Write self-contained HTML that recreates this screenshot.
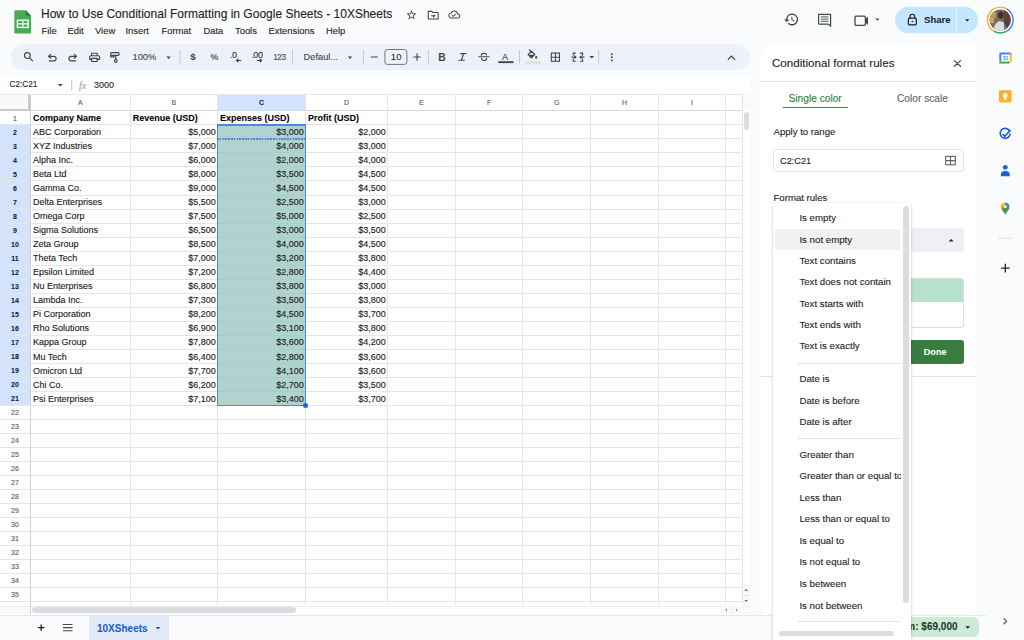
<!DOCTYPE html><html><head><meta charset="utf-8"><style>
*{box-sizing:border-box;margin:0;padding:0}
html,body{width:1024px;height:640px;overflow:hidden;background:#f9fbfd;font-family:"Liberation Sans",sans-serif;color:#1f1f1f}
.a{position:absolute}
.t{position:absolute;white-space:nowrap;line-height:1;-webkit-text-stroke:0.12px currentColor}
.t[style*="bold"]{-webkit-text-stroke:0.05px currentColor}
.t[style*="font-size:7px"]{-webkit-text-stroke:0.15px currentColor}
.t[style*="font-size:7px"][style*="bold"]{-webkit-text-stroke:0.05px currentColor}
</style></head><body>

<div class="t" style="left:41px;top:8px;font-size:12.02px;color:#1f1f1f">How to Use Conditional Formatting in Google Sheets - 10XSheets</div>
<div class="t" style="left:41.5px;top:25.5px;font-size:9.4px;color:#1f1f1f">File</div>
<div class="t" style="left:67.5px;top:25.5px;font-size:9.4px;color:#1f1f1f">Edit</div>
<div class="t" style="left:95px;top:25.5px;font-size:9.4px;color:#1f1f1f">View</div>
<div class="t" style="left:125.5px;top:25.5px;font-size:9.4px;color:#1f1f1f">Insert</div>
<div class="t" style="left:161.5px;top:25.5px;font-size:9.4px;color:#1f1f1f">Format</div>
<div class="t" style="left:203.5px;top:25.5px;font-size:9.4px;color:#1f1f1f">Data</div>
<div class="t" style="left:235px;top:25.5px;font-size:9.4px;color:#1f1f1f">Tools</div>
<div class="t" style="left:268.5px;top:25.5px;font-size:9.4px;color:#1f1f1f">Extensions</div>
<div class="t" style="left:326px;top:25.5px;font-size:9.4px;color:#1f1f1f">Help</div>
<div class="a" style="left:11px;top:44px;width:739px;height:26px;border-radius:13px;background:#edf2fa"></div>
<div class="a" style="left:0;top:76px;width:750px;height:18px;background:#fff"></div>
<div class="t" style="left:9.5px;top:81px;font-size:8.2px;color:#1f1f1f">C2:C21</div>
<div class="t" style="left:94px;top:81px;font-size:9px;color:#1f1f1f">3000</div>
<div class="a" style="left:0;top:94px;width:750px;height:520px;background:#fff;overflow:hidden">
<div class="a" style="left:217.5px;top:0;width:88.10000000000002px;height:16px;background:#d3e3fd"></div>
<div class="a" style="left:0;top:31.40px;width:30.5px;height:280.40px;background:#d3e3fd"></div>
<div class="a" style="left:742px;top:0;width:8px;height:511px;background:#fff;border-left:1px solid #eceef0"></div>
<div class="a" style="left:742px;top:0;width:8px;height:16px;background:#f8f9fa"></div>
<div class="a" style="left:743.5px;top:17.5px;width:5.5px;height:18px;background:#dadce0;border-radius:3px"></div>
<div class="a" style="left:0;top:0.4px;width:742px;height:1px;background:#e5e6e8"></div>
<div class="a" style="left:0;top:16.4px;width:742px;height:1px;background:#d6d8db"></div>
<div class="a" style="left:0;top:30.40px;width:742px;height:1px;background:#e5e6e8"></div>
<div class="a" style="left:0;top:44.42px;width:742px;height:1px;background:#e5e6e8"></div>
<div class="a" style="left:0;top:58.44px;width:742px;height:1px;background:#e5e6e8"></div>
<div class="a" style="left:0;top:72.46px;width:742px;height:1px;background:#e5e6e8"></div>
<div class="a" style="left:0;top:86.48px;width:742px;height:1px;background:#e5e6e8"></div>
<div class="a" style="left:0;top:100.50px;width:742px;height:1px;background:#e5e6e8"></div>
<div class="a" style="left:0;top:114.52px;width:742px;height:1px;background:#e5e6e8"></div>
<div class="a" style="left:0;top:128.54px;width:742px;height:1px;background:#e5e6e8"></div>
<div class="a" style="left:0;top:142.56px;width:742px;height:1px;background:#e5e6e8"></div>
<div class="a" style="left:0;top:156.58px;width:742px;height:1px;background:#e5e6e8"></div>
<div class="a" style="left:0;top:170.60px;width:742px;height:1px;background:#e5e6e8"></div>
<div class="a" style="left:0;top:184.62px;width:742px;height:1px;background:#e5e6e8"></div>
<div class="a" style="left:0;top:198.64px;width:742px;height:1px;background:#e5e6e8"></div>
<div class="a" style="left:0;top:212.66px;width:742px;height:1px;background:#e5e6e8"></div>
<div class="a" style="left:0;top:226.68px;width:742px;height:1px;background:#e5e6e8"></div>
<div class="a" style="left:0;top:240.70px;width:742px;height:1px;background:#e5e6e8"></div>
<div class="a" style="left:0;top:254.72px;width:742px;height:1px;background:#e5e6e8"></div>
<div class="a" style="left:0;top:268.74px;width:742px;height:1px;background:#e5e6e8"></div>
<div class="a" style="left:0;top:282.76px;width:742px;height:1px;background:#e5e6e8"></div>
<div class="a" style="left:0;top:296.78px;width:742px;height:1px;background:#e5e6e8"></div>
<div class="a" style="left:0;top:310.80px;width:742px;height:1px;background:#e5e6e8"></div>
<div class="a" style="left:0;top:324.82px;width:742px;height:1px;background:#e5e6e8"></div>
<div class="a" style="left:0;top:338.84px;width:742px;height:1px;background:#e5e6e8"></div>
<div class="a" style="left:0;top:352.86px;width:742px;height:1px;background:#e5e6e8"></div>
<div class="a" style="left:0;top:366.88px;width:742px;height:1px;background:#e5e6e8"></div>
<div class="a" style="left:0;top:380.90px;width:742px;height:1px;background:#e5e6e8"></div>
<div class="a" style="left:0;top:394.92px;width:742px;height:1px;background:#e5e6e8"></div>
<div class="a" style="left:0;top:408.94px;width:742px;height:1px;background:#e5e6e8"></div>
<div class="a" style="left:0;top:422.96px;width:742px;height:1px;background:#e5e6e8"></div>
<div class="a" style="left:0;top:436.98px;width:742px;height:1px;background:#e5e6e8"></div>
<div class="a" style="left:0;top:451.00px;width:742px;height:1px;background:#e5e6e8"></div>
<div class="a" style="left:0;top:465.02px;width:742px;height:1px;background:#e5e6e8"></div>
<div class="a" style="left:0;top:479.04px;width:742px;height:1px;background:#e5e6e8"></div>
<div class="a" style="left:0;top:493.06px;width:742px;height:1px;background:#e5e6e8"></div>
<div class="a" style="left:0;top:507.08px;width:742px;height:1px;background:#e5e6e8"></div>
<div class="a" style="left:0;top:521.10px;width:742px;height:1px;background:#e5e6e8"></div>
<div class="a" style="left:30.00px;top:0;width:1px;height:511px;background:#cfd1d4"></div>
<div class="a" style="left:129.80px;top:0;width:1px;height:511px;background:#e5e6e8"></div>
<div class="a" style="left:217.00px;top:0;width:1px;height:511px;background:#e5e6e8"></div>
<div class="a" style="left:305.10px;top:0;width:1px;height:511px;background:#e5e6e8"></div>
<div class="a" style="left:387.00px;top:0;width:1px;height:511px;background:#e5e6e8"></div>
<div class="a" style="left:454.90px;top:0;width:1px;height:511px;background:#e5e6e8"></div>
<div class="a" style="left:522.30px;top:0;width:1px;height:511px;background:#e5e6e8"></div>
<div class="a" style="left:590.10px;top:0;width:1px;height:511px;background:#e5e6e8"></div>
<div class="a" style="left:657.90px;top:0;width:1px;height:511px;background:#e5e6e8"></div>
<div class="a" style="left:725.30px;top:0;width:1px;height:511px;background:#e5e6e8"></div>
<div class="a" style="left:741.50px;top:0;width:1px;height:511px;background:#e5e6e8"></div>
<div class="a" style="left:217.50px;top:31.40px;width:87.60px;height:280.40px;background:#b0d3cf"></div>
<div class="a" style="left:217.50px;top:44.42px;width:87.60px;height:1px;background:#a9cdc9"></div>
<div class="a" style="left:217.50px;top:58.44px;width:87.60px;height:1px;background:#a9cdc9"></div>
<div class="a" style="left:217.50px;top:72.46px;width:87.60px;height:1px;background:#a9cdc9"></div>
<div class="a" style="left:217.50px;top:86.48px;width:87.60px;height:1px;background:#a9cdc9"></div>
<div class="a" style="left:217.50px;top:100.50px;width:87.60px;height:1px;background:#a9cdc9"></div>
<div class="a" style="left:217.50px;top:114.52px;width:87.60px;height:1px;background:#a9cdc9"></div>
<div class="a" style="left:217.50px;top:128.54px;width:87.60px;height:1px;background:#a9cdc9"></div>
<div class="a" style="left:217.50px;top:142.56px;width:87.60px;height:1px;background:#a9cdc9"></div>
<div class="a" style="left:217.50px;top:156.58px;width:87.60px;height:1px;background:#a9cdc9"></div>
<div class="a" style="left:217.50px;top:170.60px;width:87.60px;height:1px;background:#a9cdc9"></div>
<div class="a" style="left:217.50px;top:184.62px;width:87.60px;height:1px;background:#a9cdc9"></div>
<div class="a" style="left:217.50px;top:198.64px;width:87.60px;height:1px;background:#a9cdc9"></div>
<div class="a" style="left:217.50px;top:212.66px;width:87.60px;height:1px;background:#a9cdc9"></div>
<div class="a" style="left:217.50px;top:226.68px;width:87.60px;height:1px;background:#a9cdc9"></div>
<div class="a" style="left:217.50px;top:240.70px;width:87.60px;height:1px;background:#a9cdc9"></div>
<div class="a" style="left:217.50px;top:254.72px;width:87.60px;height:1px;background:#a9cdc9"></div>
<div class="a" style="left:217.50px;top:268.74px;width:87.60px;height:1px;background:#a9cdc9"></div>
<div class="a" style="left:217.50px;top:282.76px;width:87.60px;height:1px;background:#a9cdc9"></div>
<div class="a" style="left:217.50px;top:296.78px;width:87.60px;height:1px;background:#a9cdc9"></div>
<div class="a" style="left:0;top:0.5px;width:30.5px;height:16px;background:#f8f9fa;border-right:3px solid #c9cacc;border-bottom:2.5px solid #c9cacc"></div>
<div class="t" style="left:60.40px;width:40px;text-align:center;top:5px;font-size:7px;color:#5f6368;">A</div>
<div class="t" style="left:153.90px;width:40px;text-align:center;top:5px;font-size:7px;color:#5f6368;">B</div>
<div class="t" style="left:241.55px;width:40px;text-align:center;top:5px;font-size:7px;color:#041e49;font-weight:bold">C</div>
<div class="t" style="left:326.55px;width:40px;text-align:center;top:5px;font-size:7px;color:#5f6368;">D</div>
<div class="t" style="left:401.45px;width:40px;text-align:center;top:5px;font-size:7px;color:#5f6368;">E</div>
<div class="t" style="left:469.10px;width:40px;text-align:center;top:5px;font-size:7px;color:#5f6368;">F</div>
<div class="t" style="left:536.70px;width:40px;text-align:center;top:5px;font-size:7px;color:#5f6368;">G</div>
<div class="t" style="left:604.50px;width:40px;text-align:center;top:5px;font-size:7px;color:#5f6368;">H</div>
<div class="t" style="left:672.10px;width:40px;text-align:center;top:5px;font-size:7px;color:#5f6368;">I</div>
<div class="t" style="left:0;width:30px;text-align:center;top:20.60px;font-size:7px;color:#5f6368;">1</div>
<div class="t" style="left:0;width:30px;text-align:center;top:34.62px;font-size:7px;color:#041e49;font-weight:bold">2</div>
<div class="t" style="left:0;width:30px;text-align:center;top:48.64px;font-size:7px;color:#041e49;font-weight:bold">3</div>
<div class="t" style="left:0;width:30px;text-align:center;top:62.66px;font-size:7px;color:#041e49;font-weight:bold">4</div>
<div class="t" style="left:0;width:30px;text-align:center;top:76.68px;font-size:7px;color:#041e49;font-weight:bold">5</div>
<div class="t" style="left:0;width:30px;text-align:center;top:90.70px;font-size:7px;color:#041e49;font-weight:bold">6</div>
<div class="t" style="left:0;width:30px;text-align:center;top:104.72px;font-size:7px;color:#041e49;font-weight:bold">7</div>
<div class="t" style="left:0;width:30px;text-align:center;top:118.74px;font-size:7px;color:#041e49;font-weight:bold">8</div>
<div class="t" style="left:0;width:30px;text-align:center;top:132.76px;font-size:7px;color:#041e49;font-weight:bold">9</div>
<div class="t" style="left:0;width:30px;text-align:center;top:146.78px;font-size:7px;color:#041e49;font-weight:bold">10</div>
<div class="t" style="left:0;width:30px;text-align:center;top:160.80px;font-size:7px;color:#041e49;font-weight:bold">11</div>
<div class="t" style="left:0;width:30px;text-align:center;top:174.82px;font-size:7px;color:#041e49;font-weight:bold">12</div>
<div class="t" style="left:0;width:30px;text-align:center;top:188.84px;font-size:7px;color:#041e49;font-weight:bold">13</div>
<div class="t" style="left:0;width:30px;text-align:center;top:202.86px;font-size:7px;color:#041e49;font-weight:bold">14</div>
<div class="t" style="left:0;width:30px;text-align:center;top:216.88px;font-size:7px;color:#041e49;font-weight:bold">15</div>
<div class="t" style="left:0;width:30px;text-align:center;top:230.90px;font-size:7px;color:#041e49;font-weight:bold">16</div>
<div class="t" style="left:0;width:30px;text-align:center;top:244.92px;font-size:7px;color:#041e49;font-weight:bold">17</div>
<div class="t" style="left:0;width:30px;text-align:center;top:258.94px;font-size:7px;color:#041e49;font-weight:bold">18</div>
<div class="t" style="left:0;width:30px;text-align:center;top:272.96px;font-size:7px;color:#041e49;font-weight:bold">19</div>
<div class="t" style="left:0;width:30px;text-align:center;top:286.98px;font-size:7px;color:#041e49;font-weight:bold">20</div>
<div class="t" style="left:0;width:30px;text-align:center;top:301.00px;font-size:7px;color:#041e49;font-weight:bold">21</div>
<div class="t" style="left:0;width:30px;text-align:center;top:315.02px;font-size:7px;color:#5f6368;">22</div>
<div class="t" style="left:0;width:30px;text-align:center;top:329.04px;font-size:7px;color:#5f6368;">23</div>
<div class="t" style="left:0;width:30px;text-align:center;top:343.06px;font-size:7px;color:#5f6368;">24</div>
<div class="t" style="left:0;width:30px;text-align:center;top:357.08px;font-size:7px;color:#5f6368;">25</div>
<div class="t" style="left:0;width:30px;text-align:center;top:371.10px;font-size:7px;color:#5f6368;">26</div>
<div class="t" style="left:0;width:30px;text-align:center;top:385.12px;font-size:7px;color:#5f6368;">27</div>
<div class="t" style="left:0;width:30px;text-align:center;top:399.14px;font-size:7px;color:#5f6368;">28</div>
<div class="t" style="left:0;width:30px;text-align:center;top:413.16px;font-size:7px;color:#5f6368;">29</div>
<div class="t" style="left:0;width:30px;text-align:center;top:427.18px;font-size:7px;color:#5f6368;">30</div>
<div class="t" style="left:0;width:30px;text-align:center;top:441.20px;font-size:7px;color:#5f6368;">31</div>
<div class="t" style="left:0;width:30px;text-align:center;top:455.22px;font-size:7px;color:#5f6368;">32</div>
<div class="t" style="left:0;width:30px;text-align:center;top:469.24px;font-size:7px;color:#5f6368;">33</div>
<div class="t" style="left:0;width:30px;text-align:center;top:483.26px;font-size:7px;color:#5f6368;">34</div>
<div class="t" style="left:0;width:30px;text-align:center;top:497.28px;font-size:7px;color:#5f6368;">35</div>
<div class="t" style="left:0;width:30px;text-align:center;top:511.30px;font-size:7px;color:#5f6368;">36</div>
<div class="t" style="left:33.00px;top:20.00px;font-size:9px;font-weight:bold;color:#000">Company Name</div>
<div class="t" style="left:132.80px;top:20.00px;font-size:9px;font-weight:bold;color:#000">Revenue (USD)</div>
<div class="t" style="left:220.00px;top:20.00px;font-size:9px;font-weight:bold;color:#000">Expenses (USD)</div>
<div class="t" style="left:308.10px;top:20.00px;font-size:9px;font-weight:bold;color:#000">Profit (USD)</div>
<div class="t" style="left:33.00px;top:34.02px;font-size:9px;color:#1a1a1a">ABC Corporation</div>
<div class="t" style="left:130.30px;width:85.40px;text-align:right;top:34.02px;font-size:9px;color:#1a1a1a">$5,000</div>
<div class="t" style="left:217.50px;width:86.30px;text-align:right;top:34.02px;font-size:9px;color:#1a1a1a">$3,000</div>
<div class="t" style="left:305.60px;width:80.10px;text-align:right;top:34.02px;font-size:9px;color:#1a1a1a">$2,000</div>
<div class="t" style="left:33.00px;top:48.05px;font-size:9px;color:#1a1a1a">XYZ Industries</div>
<div class="t" style="left:130.30px;width:85.40px;text-align:right;top:48.05px;font-size:9px;color:#1a1a1a">$7,000</div>
<div class="t" style="left:217.50px;width:86.30px;text-align:right;top:48.05px;font-size:9px;color:#1a1a1a">$4,000</div>
<div class="t" style="left:305.60px;width:80.10px;text-align:right;top:48.05px;font-size:9px;color:#1a1a1a">$3,000</div>
<div class="t" style="left:33.00px;top:62.08px;font-size:9px;color:#1a1a1a">Alpha Inc.</div>
<div class="t" style="left:130.30px;width:85.40px;text-align:right;top:62.08px;font-size:9px;color:#1a1a1a">$6,000</div>
<div class="t" style="left:217.50px;width:86.30px;text-align:right;top:62.08px;font-size:9px;color:#1a1a1a">$2,000</div>
<div class="t" style="left:305.60px;width:80.10px;text-align:right;top:62.08px;font-size:9px;color:#1a1a1a">$4,000</div>
<div class="t" style="left:33.00px;top:76.11px;font-size:9px;color:#1a1a1a">Beta Ltd</div>
<div class="t" style="left:130.30px;width:85.40px;text-align:right;top:76.11px;font-size:9px;color:#1a1a1a">$8,000</div>
<div class="t" style="left:217.50px;width:86.30px;text-align:right;top:76.11px;font-size:9px;color:#1a1a1a">$3,500</div>
<div class="t" style="left:305.60px;width:80.10px;text-align:right;top:76.11px;font-size:9px;color:#1a1a1a">$4,500</div>
<div class="t" style="left:33.00px;top:90.14px;font-size:9px;color:#1a1a1a">Gamma Co.</div>
<div class="t" style="left:130.30px;width:85.40px;text-align:right;top:90.14px;font-size:9px;color:#1a1a1a">$9,000</div>
<div class="t" style="left:217.50px;width:86.30px;text-align:right;top:90.14px;font-size:9px;color:#1a1a1a">$4,500</div>
<div class="t" style="left:305.60px;width:80.10px;text-align:right;top:90.14px;font-size:9px;color:#1a1a1a">$4,500</div>
<div class="t" style="left:33.00px;top:104.17px;font-size:9px;color:#1a1a1a">Delta Enterprises</div>
<div class="t" style="left:130.30px;width:85.40px;text-align:right;top:104.17px;font-size:9px;color:#1a1a1a">$5,500</div>
<div class="t" style="left:217.50px;width:86.30px;text-align:right;top:104.17px;font-size:9px;color:#1a1a1a">$2,500</div>
<div class="t" style="left:305.60px;width:80.10px;text-align:right;top:104.17px;font-size:9px;color:#1a1a1a">$3,000</div>
<div class="t" style="left:33.00px;top:118.20px;font-size:9px;color:#1a1a1a">Omega Corp</div>
<div class="t" style="left:130.30px;width:85.40px;text-align:right;top:118.20px;font-size:9px;color:#1a1a1a">$7,500</div>
<div class="t" style="left:217.50px;width:86.30px;text-align:right;top:118.20px;font-size:9px;color:#1a1a1a">$5,000</div>
<div class="t" style="left:305.60px;width:80.10px;text-align:right;top:118.20px;font-size:9px;color:#1a1a1a">$2,500</div>
<div class="t" style="left:33.00px;top:132.23px;font-size:9px;color:#1a1a1a">Sigma Solutions</div>
<div class="t" style="left:130.30px;width:85.40px;text-align:right;top:132.23px;font-size:9px;color:#1a1a1a">$6,500</div>
<div class="t" style="left:217.50px;width:86.30px;text-align:right;top:132.23px;font-size:9px;color:#1a1a1a">$3,000</div>
<div class="t" style="left:305.60px;width:80.10px;text-align:right;top:132.23px;font-size:9px;color:#1a1a1a">$3,500</div>
<div class="t" style="left:33.00px;top:146.26px;font-size:9px;color:#1a1a1a">Zeta Group</div>
<div class="t" style="left:130.30px;width:85.40px;text-align:right;top:146.26px;font-size:9px;color:#1a1a1a">$8,500</div>
<div class="t" style="left:217.50px;width:86.30px;text-align:right;top:146.26px;font-size:9px;color:#1a1a1a">$4,000</div>
<div class="t" style="left:305.60px;width:80.10px;text-align:right;top:146.26px;font-size:9px;color:#1a1a1a">$4,500</div>
<div class="t" style="left:33.00px;top:160.29px;font-size:9px;color:#1a1a1a">Theta Tech</div>
<div class="t" style="left:130.30px;width:85.40px;text-align:right;top:160.29px;font-size:9px;color:#1a1a1a">$7,000</div>
<div class="t" style="left:217.50px;width:86.30px;text-align:right;top:160.29px;font-size:9px;color:#1a1a1a">$3,200</div>
<div class="t" style="left:305.60px;width:80.10px;text-align:right;top:160.29px;font-size:9px;color:#1a1a1a">$3,800</div>
<div class="t" style="left:33.00px;top:174.32px;font-size:9px;color:#1a1a1a">Epsilon Limited</div>
<div class="t" style="left:130.30px;width:85.40px;text-align:right;top:174.32px;font-size:9px;color:#1a1a1a">$7,200</div>
<div class="t" style="left:217.50px;width:86.30px;text-align:right;top:174.32px;font-size:9px;color:#1a1a1a">$2,800</div>
<div class="t" style="left:305.60px;width:80.10px;text-align:right;top:174.32px;font-size:9px;color:#1a1a1a">$4,400</div>
<div class="t" style="left:33.00px;top:188.35px;font-size:9px;color:#1a1a1a">Nu Enterprises</div>
<div class="t" style="left:130.30px;width:85.40px;text-align:right;top:188.35px;font-size:9px;color:#1a1a1a">$6,800</div>
<div class="t" style="left:217.50px;width:86.30px;text-align:right;top:188.35px;font-size:9px;color:#1a1a1a">$3,800</div>
<div class="t" style="left:305.60px;width:80.10px;text-align:right;top:188.35px;font-size:9px;color:#1a1a1a">$3,000</div>
<div class="t" style="left:33.00px;top:202.38px;font-size:9px;color:#1a1a1a">Lambda Inc.</div>
<div class="t" style="left:130.30px;width:85.40px;text-align:right;top:202.38px;font-size:9px;color:#1a1a1a">$7,300</div>
<div class="t" style="left:217.50px;width:86.30px;text-align:right;top:202.38px;font-size:9px;color:#1a1a1a">$3,500</div>
<div class="t" style="left:305.60px;width:80.10px;text-align:right;top:202.38px;font-size:9px;color:#1a1a1a">$3,800</div>
<div class="t" style="left:33.00px;top:216.41px;font-size:9px;color:#1a1a1a">Pi Corporation</div>
<div class="t" style="left:130.30px;width:85.40px;text-align:right;top:216.41px;font-size:9px;color:#1a1a1a">$8,200</div>
<div class="t" style="left:217.50px;width:86.30px;text-align:right;top:216.41px;font-size:9px;color:#1a1a1a">$4,500</div>
<div class="t" style="left:305.60px;width:80.10px;text-align:right;top:216.41px;font-size:9px;color:#1a1a1a">$3,700</div>
<div class="t" style="left:33.00px;top:230.44px;font-size:9px;color:#1a1a1a">Rho Solutions</div>
<div class="t" style="left:130.30px;width:85.40px;text-align:right;top:230.44px;font-size:9px;color:#1a1a1a">$6,900</div>
<div class="t" style="left:217.50px;width:86.30px;text-align:right;top:230.44px;font-size:9px;color:#1a1a1a">$3,100</div>
<div class="t" style="left:305.60px;width:80.10px;text-align:right;top:230.44px;font-size:9px;color:#1a1a1a">$3,800</div>
<div class="t" style="left:33.00px;top:244.47px;font-size:9px;color:#1a1a1a">Kappa Group</div>
<div class="t" style="left:130.30px;width:85.40px;text-align:right;top:244.47px;font-size:9px;color:#1a1a1a">$7,800</div>
<div class="t" style="left:217.50px;width:86.30px;text-align:right;top:244.47px;font-size:9px;color:#1a1a1a">$3,600</div>
<div class="t" style="left:305.60px;width:80.10px;text-align:right;top:244.47px;font-size:9px;color:#1a1a1a">$4,200</div>
<div class="t" style="left:33.00px;top:258.50px;font-size:9px;color:#1a1a1a">Mu Tech</div>
<div class="t" style="left:130.30px;width:85.40px;text-align:right;top:258.50px;font-size:9px;color:#1a1a1a">$6,400</div>
<div class="t" style="left:217.50px;width:86.30px;text-align:right;top:258.50px;font-size:9px;color:#1a1a1a">$2,800</div>
<div class="t" style="left:305.60px;width:80.10px;text-align:right;top:258.50px;font-size:9px;color:#1a1a1a">$3,600</div>
<div class="t" style="left:33.00px;top:272.53px;font-size:9px;color:#1a1a1a">Omicron Ltd</div>
<div class="t" style="left:130.30px;width:85.40px;text-align:right;top:272.53px;font-size:9px;color:#1a1a1a">$7,700</div>
<div class="t" style="left:217.50px;width:86.30px;text-align:right;top:272.53px;font-size:9px;color:#1a1a1a">$4,100</div>
<div class="t" style="left:305.60px;width:80.10px;text-align:right;top:272.53px;font-size:9px;color:#1a1a1a">$3,600</div>
<div class="t" style="left:33.00px;top:286.56px;font-size:9px;color:#1a1a1a">Chi Co.</div>
<div class="t" style="left:130.30px;width:85.40px;text-align:right;top:286.56px;font-size:9px;color:#1a1a1a">$6,200</div>
<div class="t" style="left:217.50px;width:86.30px;text-align:right;top:286.56px;font-size:9px;color:#1a1a1a">$2,700</div>
<div class="t" style="left:305.60px;width:80.10px;text-align:right;top:286.56px;font-size:9px;color:#1a1a1a">$3,500</div>
<div class="t" style="left:33.00px;top:300.59px;font-size:9px;color:#1a1a1a">Psi Enterprises</div>
<div class="t" style="left:130.30px;width:85.40px;text-align:right;top:300.59px;font-size:9px;color:#1a1a1a">$7,100</div>
<div class="t" style="left:217.50px;width:86.30px;text-align:right;top:300.59px;font-size:9px;color:#1a1a1a">$3,400</div>
<div class="t" style="left:305.60px;width:80.10px;text-align:right;top:300.59px;font-size:9px;color:#1a1a1a">$3,700</div>
<div class="a" style="left:216.50px;top:30.40px;width:89.60px;height:281.90px;border:1.5px solid #4d86e8"></div>
<div class="a" style="left:216.50px;top:31.00px;width:89.60px;height:1.2px;background:#4d86e8"></div>
<div class="a" style="left:216.50px;top:44.02px;width:89.60px;height:1.5px;background:repeating-linear-gradient(90deg,#4d86e8 0 1.6px,rgba(77,134,232,0.25) 1.6px 2.8px)"></div>
<div class="a" style="left:216.70px;top:30.40px;width:1.5px;height:14.02px;background:repeating-linear-gradient(180deg,#4d86e8 0 1.6px,rgba(77,134,232,0.25) 1.6px 2.8px)"></div>
<div class="a" style="left:302.80px;top:308.80px;width:5px;height:5px;border-radius:2.5px;background:#1a63e0"></div>
<div class="a" style="left:0;top:512.3px;width:742px;height:8px;background:#fff"></div>
<div class="a" style="left:0;top:512.3px;width:30px;height:8px;background:#f8f9fa"></div>
<div class="a" style="left:0;top:512px;width:742px;height:1px;background:#eceef0"></div>
<div class="a" style="left:30px;top:507px;width:1px;height:14px;background:#cfd1d4"></div>
<div class="a" style="left:32px;top:513.1px;width:264px;height:6px;border-radius:3px;background:#dadce0"></div>
<div class="a" style="left:721.4px;top:512.3px;width:21px;height:8px;background:#f8f9fa;border-left:1px solid #eceef0"></div>
<div class="a" style="left:732.3px;top:512.3px;width:1px;height:8px;background:#eceef0"></div>
<div class="a" style="left:742.5px;top:491px;width:7.5px;height:30px;background:#f8f9fa;border-top:1px solid #eceef0"></div>
<div class="a" style="left:742.5px;top:501.29999999999995px;width:7.5px;height:1px;background:#e3e6ea"></div>
<div class="a" style="left:742.5px;top:512px;width:7.5px;height:1px;background:#eceef0"></div>
</div>
<div class="a" style="left:761px;top:44px;width:215px;height:570px;background:#fff;border-radius:10px 10px 10px 10px"></div>
<div class="t" style="left:772px;top:56.8px;font-size:11.6px;color:#1f1f1f">Conditional format rules</div>
<div class="a" style="left:761px;top:81px;width:215px;height:1px;background:#e3e3e3"></div>
<div class="t" style="left:788.5px;top:94.3px;font-size:10.2px;color:#2b8442">Single color</div>
<div class="a" style="left:783px;top:106.7px;width:65px;height:1.6px;background:#2b8a45"></div>
<div class="t" style="left:897px;top:94.3px;font-size:10.2px;color:#5f6368">Color scale</div>
<div class="t" style="left:773.5px;top:127px;font-size:9.6px;color:#1f1f1f">Apply to range</div>
<div class="a" style="left:773px;top:149px;width:191px;height:23px;border:1px solid #e1e3e6;border-radius:3px"></div>
<div class="t" style="left:780px;top:156.8px;font-size:9.2px;color:#1f1f1f">C2:C21</div>
<div class="t" style="left:773.5px;top:193px;font-size:9.6px;color:#1f1f1f">Format rules</div>
<div class="a" style="left:773px;top:228px;width:191px;height:24px;background:#eef0f3;border-radius:3px"></div>
<div class="a" style="left:773px;top:278px;width:191px;height:50px;border:1px solid #dadce0;border-radius:3px;overflow:hidden"><div style="height:23px;background:#b7e1cd"></div></div>
<div class="a" style="left:890px;top:340px;width:74px;height:24px;background:#387d3f;border-radius:3px"></div>
<div class="t" style="left:923.8px;top:347.5px;font-size:9.1px;font-weight:bold;color:#fff">Done</div>
<div class="a" style="left:761px;top:376px;width:215px;height:1px;background:#e3e3e3"></div>
<div class="a" style="left:0;top:614.5px;width:986px;height:1px;background:#e6e8eb"></div>
<div class="a" style="left:89px;top:615px;width:80px;height:25px;background:#e1e9f7"></div>
<div class="t" style="left:97px;top:624.2px;font-size:10px;font-weight:bold;color:#1a5fd0">10XSheets</div>
<div class="a" style="left:870px;top:617px;width:109px;height:20px;background:#ceead6;border-radius:6px"></div>
<div class="t" style="left:893.6px;top:621.5px;font-size:10px;font-weight:bold;color:#1b3325">Sum: $69,000</div>
<svg class="a" style="left:0;top:0" width="1024" height="640"><path d="M14.3 11.5 Q14.3 10.3 15.5 10.3 H25.8 L31.1 15.7 V32.3 Q31.1 33.5 29.9 33.5 H15.5 Q14.3 33.5 14.3 32.3 Z" fill="#4bab55"/><path d="M25.8 10.3 V14.5 Q25.8 15.7 27 15.7 H31.1 Z" fill="#2e7d32" opacity="0.9"/><rect x="17.4" y="20.2" width="10.8" height="7.2" fill="none" stroke="#fff" stroke-width="1.3"/><path d="M17.4 23.8 H28.2 M22.8 20.2 V27.4" stroke="#fff" stroke-width="1.2"/><g transform="translate(405.5,8.9) scale(0.5)"><path fill="#444746" d="M22 9.24l-7.19-.62L12 2 9.19 8.63 2 9.24l5.46 4.73L5.82 21 12 17.27 18.18 21l-1.63-7.03L22 9.24zM12 15.4l-3.76 2.27 1-4.28-3.32-2.88 4.38-.38L12 6.1l1.71 4.04 4.38.38-3.32 2.88 1 4.28L12 15.4z"/></g><g transform="translate(426.6,8.6) scale(0.55)"><path fill="#444746" d="M20 6h-8l-2-2H4c-1.1 0-1.99.9-1.99 2L2 18c0 1.1.9 2 2 2h16c1.1 0 2-.9 2-2V8c0-1.1-.9-2-2-2zm0 12H4V6h5.17l2 2H20v10zM12.16 9.41l1.41 1.41-1.18 1.18H8v2h4.39l-1.18 1.18 1.41 1.41L16.24 13z"/></g><g transform="translate(448.3,8.6) scale(0.5)"><path fill="#444746" d="M19.35 10.04C18.67 6.59 15.64 4 12 4 9.11 4 6.6 5.64 5.35 8.04 2.34 8.36 0 10.91 0 14c0 3.31 2.69 6 6 6h13c2.76 0 5-2.24 5-5 0-2.64-2.05-4.78-4.65-4.96zM19 18H6c-2.21 0-4-1.79-4-4 0-2.05 1.53-3.76 3.56-3.97l1.07-.11.5-.95C8.08 7.14 9.94 6 12 6c2.62 0 4.88 1.86 5.39 4.43l.3 1.5 1.53.11c1.56.1 2.78 1.41 2.78 2.96 0 1.65-1.35 3-3 3zm-9-3.82l-2.09-2.09L6.5 13.5 10 17l6.01-6.01-1.41-1.41z"/></g><g transform="translate(783.4,11.4) scale(0.667)"><path fill="#444746" d="M13 3c-4.97 0-9 4.03-9 9H1l3.89 3.89.07.14L9 12H6c0-3.87 3.13-7 7-7s7 3.13 7 7-3.13 7-7 7c-1.93 0-3.68-.79-4.94-2.06l-1.42 1.42C8.27 19.99 10.51 21 13 21c4.97 0 9-4.03 9-9s-4.03-9-9-9zm-1 5v5l4.28 2.54.72-1.21-3.5-2.08V8H12z"/></g><path d="M818.6 15 Q818.6 14.3 819.3 14.3 H829.9 Q830.6 14.3 830.6 15 V26.2 L828.3 24.1 H819.3 Q818.6 24.1 818.6 23.4 Z" fill="none" stroke="#444746" stroke-width="1.2" stroke-linejoin="round"/><path d="M820.8 16.9 H828.4 M820.8 19.1 H828.4 M820.8 21.3 H828.4" stroke="#444746" stroke-width="0.9"/><path d="M855.6 16.2 H864.3 Q865.4 16.2 865.4 17.3 V24.3 Q865.4 25.4 864.3 25.4 H856.2 Q855 25.4 855 24.2 V17.8 Z" fill="none" stroke="#444746" stroke-width="1.3" stroke-linejoin="round"/><path d="M865.4 19 L868 16.6 V25 L865.4 22.6 Z" fill="#444746"/><path d="M875.3 18.4 H879.5 L877.4 20.7 Z" fill="#444746"/><rect x="895.1" y="6.8" width="83.1" height="26.4" rx="13.2" fill="#c2e7ff"/><rect x="956" y="6.8" width="0.9" height="26.4" fill="#f9fbfd" opacity="0.75"/><rect x="908.4" y="18.2" width="7.9" height="6.6" rx="1" fill="none" stroke="#1f1f1f" stroke-width="1.2"/><path d="M910 18.2 V16.6 A2.35 2.35 0 0 1 914.7 16.6 V18.2" fill="none" stroke="#1f1f1f" stroke-width="1.2"/><circle cx="912.35" cy="21.5" r="0.8" fill="#1f1f1f"/><path d="M965.1 19.2 H969.4 L967.25 21.5 Z" fill="#1f1f1f"/><path d="M1006.65 8.83 A12.9 12.9 0 0 1 1006.65 31.17" fill="none" stroke="#3b7ded" stroke-width="1.4"/><path d="M1006.65 31.17 A12.9 12.9 0 0 1 993.75 31.17" fill="none" stroke="#34a853" stroke-width="1.4"/><path d="M993.75 31.17 A12.9 12.9 0 0 1 1006.65 8.83" fill="none" stroke="#f4b023" stroke-width="1.4"/><clipPath id="av"><circle cx="1000.2" cy="20" r="10.6"/></clipPath><g clip-path="url(#av)"><rect x="988" y="8" width="25" height="25" fill="#7d6a5c"/><rect x="1004" y="8" width="10" height="25" fill="#5e4238"/><rect x="990" y="12" width="6" height="6" fill="#b59a5e"/><rect x="989" y="18" width="5" height="5" fill="#c4a862"/><path d="M993 33 Q994 22 1000 21 Q1007 22 1008 33 Z" fill="#d9dde0"/><ellipse cx="1000.8" cy="15.2" rx="2.8" ry="3.6" fill="#3d2f29"/><rect x="1004" y="21" width="4" height="12" fill="#3f3f42" opacity="0.7"/></g><circle cx="27.4" cy="55.6" r="2.9" fill="none" stroke="#444746" stroke-width="1.15" stroke-linecap="round" stroke-linejoin="round"/><path d="M29.6 57.8 L32.6 60.8" fill="none" stroke="#444746" stroke-width="1.15" stroke-linecap="round" stroke-linejoin="round"/><path d="M48.9 56.3 H53.8 A2.3 2.3 0 0 1 53.8 60.9 H49.4" fill="none" stroke="#444746" stroke-width="1.15" stroke-linecap="round" stroke-linejoin="round"/><path d="M50.7 54.4 L48.6 56.3 L50.7 58.2" fill="none" stroke="#444746" stroke-width="1.15" stroke-linecap="round" stroke-linejoin="round"/><path d="M76.1 56.3 H71.2 A2.3 2.3 0 0 0 71.2 60.9 H75.6" fill="none" stroke="#444746" stroke-width="1.15" stroke-linecap="round" stroke-linejoin="round"/><path d="M74.3 54.4 L76.4 56.3 L74.3 58.2" fill="none" stroke="#444746" stroke-width="1.15" stroke-linecap="round" stroke-linejoin="round"/><path d="M91.6 55.4 V53.2 H97.2 V55.4" fill="none" stroke="#444746" stroke-width="1.15" stroke-linecap="round" stroke-linejoin="round"/><path d="M91.6 59.4 H89.7 V56.8 Q89.7 55.7 90.8 55.7 H98.4 Q99.5 55.7 99.5 56.8 V59.4 H97.2" fill="none" stroke="#444746" stroke-width="1.15" stroke-linecap="round" stroke-linejoin="round"/><rect x="91.6" y="58.4" width="5.6" height="3.1" fill="none" stroke="#444746" stroke-width="1.15" stroke-linecap="round" stroke-linejoin="round"/><rect x="110.8" y="52.6" width="8.2" height="2.7" rx="0.8" fill="none" stroke="#444746" stroke-width="1.15" stroke-linecap="round" stroke-linejoin="round"/><path d="M110.8 55.3 V56.9 H115.8 V59.3" fill="none" stroke="#444746" stroke-width="1.15" stroke-linecap="round" stroke-linejoin="round"/><rect x="114.7" y="59.3" width="2.3" height="3" rx="1" fill="none" stroke="#444746" stroke-width="1.15" stroke-linecap="round" stroke-linejoin="round"/><path d="M166.4 56.6 H170.8 L168.6 58.9 Z" fill="#444746"/><path d="M347.8 56.6 H352.2 L350 58.9 Z" fill="#444746"/><path d="M589.3 56.1 H594.2 L591.75 58.4 Z" fill="#444746"/><rect x="179.6" y="50" width="1" height="13.5" fill="#c7c7c7"/><rect x="292.0" y="50" width="1" height="13.5" fill="#c7c7c7"/><rect x="362.9" y="50" width="1" height="13.5" fill="#c7c7c7"/><rect x="427.9" y="50" width="1" height="13.5" fill="#c7c7c7"/><rect x="519.0" y="50" width="1" height="13.5" fill="#c7c7c7"/><rect x="598.2" y="50" width="1" height="13.5" fill="#c7c7c7"/><path d="M240.8 60.5 H236.6 M238 59.2 L236.5 60.5 L238 61.8" fill="none" stroke="#444746" stroke-width="1.15" stroke-linecap="round" stroke-linejoin="round" stroke-width="1.05"/><path d="M257.2 60.5 H261.6 M260.2 59.2 L261.7 60.5 L260.2 61.8" fill="none" stroke="#444746" stroke-width="1.15" stroke-linecap="round" stroke-linejoin="round" stroke-width="1.05"/><path d="M371.2 57 H377.3" fill="none" stroke="#444746" stroke-width="1.15" stroke-linecap="round" stroke-linejoin="round"/><rect x="384.9" y="49.5" width="22" height="14.9" rx="2.5" fill="none" stroke="#747775" stroke-width="1"/><path d="M413.9 57 H420.2 M417.05 53.85 V60.15" fill="none" stroke="#444746" stroke-width="1.15" stroke-linecap="round" stroke-linejoin="round"/><path d="M460.5 53.6 H466 M458.9 60.2 H464.4 M463.6 53.6 L461.4 60.2" fill="none" stroke="#444746" stroke-width="1.15" stroke-linecap="round" stroke-linejoin="round" stroke-width="1.25"/><path d="M478.8 56.7 H489" fill="none" stroke="#444746" stroke-width="1.15" stroke-linecap="round" stroke-linejoin="round"/><path d="M486.6 55 Q486.3 53.3 484 53.3 Q481.3 53.3 481.3 55.2" fill="none" stroke="#444746" stroke-width="1.15" stroke-linecap="round" stroke-linejoin="round"/><path d="M481.6 58.3 Q481.6 60.5 484 60.5 Q486.6 60.5 486.6 58.5" fill="none" stroke="#444746" stroke-width="1.15" stroke-linecap="round" stroke-linejoin="round"/><rect x="498.3" y="61.2" width="15.2" height="1.9" fill="#444746"/><path d="M528.1 54.6 L531.4 51.3 L534.7 54.5 L531.4 57.8 Z" fill="none" stroke="#444746" stroke-width="1.2" stroke-linejoin="round"/><path d="M528.3 54.7 H534.5 L531.4 57.7 Z" fill="#444746"/><path d="M529.4 49.9 L531.5 52" stroke="#444746" stroke-width="1.2" stroke-linecap="round"/><ellipse cx="536.2" cy="57.3" rx="1.05" ry="1.35" fill="#444746"/><rect x="525" y="61.1" width="16" height="2.6" fill="#cfe8d3"/><rect x="551.35" y="53.05" width="8.1" height="8.2" fill="none" stroke="#444746" stroke-width="1.1"/><path d="M555.45 53.05 V61.25 M551.35 57.15 H559.45" stroke="#444746" stroke-width="1.05"/><path d="M575.8 53.1 H573.3 V55.4 M573.3 58.8 V61.2 H575.8 M579.9 53.1 H582.6 V55.4 M582.6 58.8 V61.2 H579.9" fill="none" stroke="#444746" stroke-width="1.15"/><path d="M572 57.1 H575.6 M574.6 55.9 L576 57.1 L574.6 58.3 M584 57.1 H580.3 M581.3 55.9 L579.9 57.1 L581.3 58.3" fill="none" stroke="#444746" stroke-width="1.05" stroke-linecap="round" stroke-linejoin="round"/><circle cx="611.8" cy="54.3" r="0.95" fill="#444746"/><circle cx="611.8" cy="57.3" r="0.95" fill="#444746"/><circle cx="611.8" cy="60.4" r="0.95" fill="#444746"/><path d="M728.2 59.4 L731.5 56 L734.8 59.4" fill="none" stroke="#444746" stroke-width="1.15" stroke-linecap="round" stroke-linejoin="round" stroke-width="1.3"/><path d="M57.8 83.9 H62.8 L60.3 86.5 Z" fill="#444746"/><rect x="71.2" y="79.7" width="1" height="10.8" fill="#c7c7c7"/><path d="M954.2 60.6 L960.5 66.3 M960.5 60.6 L954.2 66.3" fill="none" stroke="#444746" stroke-width="1.15" stroke-linecap="round" stroke-linejoin="round" stroke-width="1.2"/><rect x="945.7" y="156.4" width="9.6" height="8.4" fill="none" stroke="#5f6368" stroke-width="1.1"/><path d="M950.5 156.4 V164.8 M945.7 160.6 H955.3" stroke="#5f6368" stroke-width="1.1"/><path d="M948.8 241.6 H953.6 L951.2 239 Z" fill="#1f1f1f"/><rect x="999.3" y="52.4" width="12" height="11" rx="1" fill="#fff"/><path d="M999.3 63.4 V53.4 Q999.3 52.4 1000.3 52.4 H1010 V54.4 H1001.3 V61.4 H999.3" fill="#4285f4"/><rect x="999.3" y="61.6" width="10.5" height="1.9" fill="#34a853"/><rect x="1009.8" y="54.2" width="1.9" height="7.6" fill="#fbbc04"/><rect x="1009.8" y="52.4" width="1.9" height="1.9" fill="#ea4335" opacity="0.6"/><text x="1005.5" y="60.3" font-size="5" font-family="Liberation Sans" font-weight="bold" fill="#4285f4" text-anchor="middle">31</text><rect x="999" y="90.2" width="12.6" height="12.2" rx="1.3" fill="#f6b32b"/><circle cx="1005.3" cy="95.4" r="2.4" fill="#fff"/><rect x="1004.2" y="97.4" width="2.2" height="2.2" fill="#fff"/><path d="M1009.6 131 A5 5 0 1 0 1010.2 133.4" fill="none" stroke="#1a5fe0" stroke-width="1.6"/><path d="M1002.4 134 L1004.7 136.3 L1010.6 130" fill="none" stroke="#1a5fe0" stroke-width="1.6"/><circle cx="1005.3" cy="167.3" r="2.4" fill="#1a5fe0"/><path d="M1000.9 176.3 V174.5 Q1000.9 171 1005.3 171 Q1009.7 171 1009.7 174.5 V176.3 Z" fill="#1a5fe0"/><path d="M1005.3 214.6 L1001.6 209.2 A4.2 4.2 0 1 1 1009 209.2 Z" fill="#34a853"/><path d="M1001.6 209.2 A4.2 4.2 0 0 1 1005.3 202.5 L1005.3 207.2 Z" fill="#fbbc04"/><path d="M1005.3 202.5 A4.2 4.2 0 0 1 1009.4 206 L1005.3 207.2 Z" fill="#4285f4"/><path d="M1001.3 207.6 L1005.3 207 L1005.3 211 Z" fill="#ea4335" opacity="0.7"/><circle cx="1005.3" cy="206.7" r="1.3" fill="#fff"/><rect x="998.2" y="237.8" width="13.8" height="0.9" fill="#dadce0"/><path d="M1001 268.1 H1009.6 M1005.3 263.8 V272.4" stroke="#1f1f1f" stroke-width="1.3"/><path d="M1003.6 618.4 L1006.6 621.3 L1003.6 624.2" fill="none" stroke="#5f6368" stroke-width="1.2"/><path d="M38 627.6 H44.4 M41.2 624.4 V630.8" stroke="#1f1f1f" stroke-width="1.3"/><path d="M62.9 624.5 H72.5 M62.9 627.6 H72.5 M62.9 630.7 H72.5" stroke="#444746" stroke-width="1.1"/><path d="M155.6 626.9 H160.4 L158 629.4 Z" fill="#0b57d0"/><path d="M965.3 626.3 H970 L967.65 628.8 Z" fill="#1f1f1f"/><path d="M744.3 591 H748 L746.15 588.8 Z M744.3 599.9 H748 L746.15 602.1 Z" fill="#70757a"/><path d="M727 608.6 V611.6 L725.2 610.1 Z M736.2 608.6 V611.6 L738 610.1 Z" fill="#80868b"/></svg>
<div class="t" style="left:132.5px;top:53.3px;font-size:9.3px;color:#444746">100%</div>
<div class="t" style="left:190.2px;top:52.3px;font-size:9.8px;font-weight:bold;color:#444746">$</div>
<div class="t" style="left:210.6px;top:52.6px;font-size:8.8px;color:#2f3133">%</div>
<div class="t" style="left:229.8px;top:50.5px;font-size:9px;color:#2f3133;letter-spacing:-0.4px">.0</div>
<div class="t" style="left:251.2px;top:50.5px;font-size:9px;color:#2f3133;letter-spacing:-0.4px">.00</div>
<div class="t" style="left:273.3px;top:53.6px;font-size:8.2px;color:#444746;letter-spacing:-0.5px">123</div>
<div class="t" style="left:303.5px;top:53.2px;font-size:9.3px;color:#444746">Defaul...</div>
<div class="t" style="left:390.8px;top:51.9px;font-size:9.6px;color:#1f1f1f;-webkit-text-stroke:0">10</div>
<div class="t" style="left:438.3px;top:53.2px;font-size:10.2px;font-weight:bold;color:#444746">B</div>
<div class="t" style="left:502px;top:52.9px;font-size:9px;color:#444746">A</div>
<div class="t" style="left:79px;top:80.5px;font-size:10px;font-style:italic;font-family:'Liberation Serif',serif;color:#9aa0a6">fx</div>
<div class="t" style="left:924px;top:15px;font-size:9.6px;font-weight:bold;color:#1f1f1f">Share</div>
<div class="a" style="left:772.5px;top:203px;width:138.5px;height:440px;background:#fff;border-radius:4px;box-shadow:0 1px 3px rgba(0,0,0,.25)"></div>
<div class="a" style="left:774.5px;top:228.75px;width:125.5px;height:21.25px;background:#f0f1f3"></div>
<div class="a" style="left:772.5px;top:203px;width:128px;height:440px;overflow:hidden">
<div class="t" style="left:26.9px;top:10.00px;font-size:9.7px;color:#1f1f1f">Is empty</div>
<div class="t" style="left:26.9px;top:31.50px;font-size:9.7px;color:#1f1f1f">Is not empty</div>
<div class="t" style="left:26.9px;top:52.80px;font-size:9.7px;color:#1f1f1f">Text contains</div>
<div class="t" style="left:26.9px;top:74.20px;font-size:9.7px;color:#1f1f1f">Text does not contain</div>
<div class="t" style="left:26.9px;top:95.60px;font-size:9.7px;color:#1f1f1f">Text starts with</div>
<div class="t" style="left:26.9px;top:117.00px;font-size:9.7px;color:#1f1f1f">Text ends with</div>
<div class="t" style="left:26.9px;top:138.40px;font-size:9.7px;color:#1f1f1f">Text is exactly</div>
<div class="t" style="left:26.9px;top:171.20px;font-size:9.7px;color:#1f1f1f">Date is</div>
<div class="t" style="left:26.9px;top:192.50px;font-size:9.7px;color:#1f1f1f">Date is before</div>
<div class="t" style="left:26.9px;top:213.70px;font-size:9.7px;color:#1f1f1f">Date is after</div>
<div class="t" style="left:26.9px;top:246.90px;font-size:9.7px;color:#1f1f1f">Greater than</div>
<div class="t" style="left:26.9px;top:268.30px;font-size:9.7px;color:#1f1f1f">Greater than or equal to</div>
<div class="t" style="left:26.9px;top:289.70px;font-size:9.7px;color:#1f1f1f">Less than</div>
<div class="t" style="left:26.9px;top:311.20px;font-size:9.7px;color:#1f1f1f">Less than or equal to</div>
<div class="t" style="left:26.9px;top:332.60px;font-size:9.7px;color:#1f1f1f">Is equal to</div>
<div class="t" style="left:26.9px;top:354.10px;font-size:9.7px;color:#1f1f1f">Is not equal to</div>
<div class="t" style="left:26.9px;top:375.50px;font-size:9.7px;color:#1f1f1f">Is between</div>
<div class="t" style="left:26.9px;top:397.50px;font-size:9.7px;color:#1f1f1f">Is not between</div>
</div>
<div class="a" style="left:798px;top:362.5px;width:102px;height:1px;background:#e3e3e3"></div>
<div class="a" style="left:798px;top:438.2px;width:102px;height:1px;background:#e3e3e3"></div>
<div class="a" style="left:798px;top:621.2px;width:102px;height:1px;background:#e3e3e3"></div>
<div class="a" style="left:903px;top:206px;width:5.5px;height:397px;background:#dadce0;border-radius:3px"></div>
<div class="a" style="left:779px;top:631px;width:115px;height:4.5px;background:#dadce0;border-radius:3px"></div>
</body></html>
